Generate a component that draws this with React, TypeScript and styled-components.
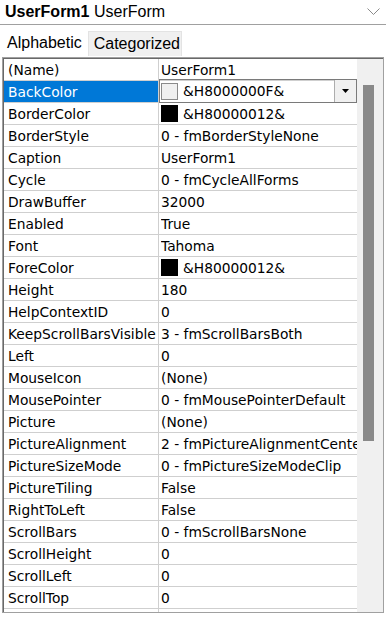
import React from "react";
import styled, { createGlobalStyle } from "styled-components";

const Global = createGlobalStyle`
  html, body { margin: 0; padding: 0; background: #ffffff; }
  body { font-family: "Liberation Sans", Arial, sans-serif; color: #000; width: 386px; height: 617px; overflow: hidden; }
  * { box-sizing: border-box; }
`;

const Window = styled.div`
  width: 386px;
  height: 617px;
  display: flex;
  flex-direction: column;
  background: #ffffff;
`;

const Header = styled.div`
  height: 25px;
  display: flex;
  align-items: center;
  padding: 0 6px 1px 5px;
  border-bottom: 1px solid #a0a0a0;
  font-size: 16px;
`;

const Title = styled.div`
  flex: 1;
  white-space: nowrap;
  b { font-weight: 700; }
`;

const TabBar = styled.div`
  height: 32px;
  display: flex;
  align-items: flex-end;
  padding: 0 0 0 2px;
`;

const Tab = styled.div<{ $active?: boolean }>`
  height: ${(p) => (p.$active ? 30 : 25)}px;
  padding: ${(p) => (p.$active ? "0 5px 0 4px" : "0 1px 0 5px")};
  display: flex;
  align-items: center;
  font-size: 16px;
  background: ${(p) => (p.$active ? "#ffffff" : "#f0f0f0")};
  border: 1px solid ${(p) => (p.$active ? "#ffffff" : "#e3e3e3")};
  border-bottom: none;
  margin-bottom: ${(p) => (p.$active ? 0 : 1)}px;
`;

const Frame = styled.div`
  margin-left: 2px;
  width: 382px;
  height: 556px;
  border: 1px solid #a0a0a0;
  display: flex;
`;

const Inner = styled.div`
  flex: 1;
  display: flex;
  border-left: 1px solid #696969;
  border-top: 1px solid #696969;
  overflow: hidden;
`;

const List = styled.div`
  flex: 1;
  overflow: hidden;
  display: flex;
  flex-direction: column;
`;

const Row = styled.div`
  height: 22px;
  flex: none;
  display: flex;
  border-bottom: 1px solid #cfcfcf;
  font-family: "DejaVu Sans", Tahoma, Verdana, sans-serif;
  font-size: 13.8px;
`;

const NameCell = styled.div<{ $selected?: boolean }>`
  width: 155px;
  flex: none;
  padding-left: 4px;
  display: flex;
  align-items: center;
  white-space: nowrap;
  overflow: hidden;
  border-right: 1px solid #cfcfcf;
  background: ${(p) => (p.$selected ? "#0078d7" : "transparent")};
  color: ${(p) => (p.$selected ? "#ffffff" : "#000000")};
`;

const ValueCell = styled.div<{ $edit?: boolean }>`
  flex: 1;
  min-width: 0;
  display: flex;
  align-items: center;
  padding-left: ${(p) => (p.$edit ? 1 : 2)}px;
  white-space: nowrap;
  overflow: hidden;
  border: ${(p) => (p.$edit ? "1px solid #7a7a7a" : "none")};
  margin: ${(p) => (p.$edit ? "-2px 0 -1px 0" : "0")};
`;

const ValueText = styled.span`
  flex: 1;
  overflow: hidden;
`;

const Swatch = styled.span<{ $color: string }>`
  width: 17px;
  height: 17px;
  flex: none;
  margin-right: 5px;
  background: ${(p) => p.$color};
  border: 1px solid ${(p) => (p.$color === "#000000" ? "#000000" : "#8a8a8a")};
`;

const DropButton = styled.span`
  width: 22px;
  align-self: stretch;
  flex: none;
  border-left: 1px solid #adadad;
  background: #f0f0f0;
  display: flex;
  align-items: center;
  justify-content: center;
`;

const Scrollbar = styled.div`
  width: 26px;
  flex: none;
  background: #f0f0f0;
  padding: 26px 0 0 6px;
`;

const Thumb = styled.div`
  width: 11px;
  height: 356px;
  background: #898989;
`;

type Prop = { name: string; value: string; swatch?: string; selected?: boolean };

const props: Prop[] = [
  { name: "(Name)", value: "UserForm1" },
  { name: "BackColor", value: "&H8000000F&", swatch: "#f0f0f0", selected: true },
  { name: "BorderColor", value: "&H80000012&", swatch: "#000000" },
  { name: "BorderStyle", value: "0 - fmBorderStyleNone" },
  { name: "Caption", value: "UserForm1" },
  { name: "Cycle", value: "0 - fmCycleAllForms" },
  { name: "DrawBuffer", value: "32000" },
  { name: "Enabled", value: "True" },
  { name: "Font", value: "Tahoma" },
  { name: "ForeColor", value: "&H80000012&", swatch: "#000000" },
  { name: "Height", value: "180" },
  { name: "HelpContextID", value: "0" },
  { name: "KeepScrollBarsVisible", value: "3 - fmScrollBarsBoth" },
  { name: "Left", value: "0" },
  { name: "MouseIcon", value: "(None)" },
  { name: "MousePointer", value: "0 - fmMousePointerDefault" },
  { name: "Picture", value: "(None)" },
  { name: "PictureAlignment", value: "2 - fmPictureAlignmentCenter" },
  { name: "PictureSizeMode", value: "0 - fmPictureSizeModeClip" },
  { name: "PictureTiling", value: "False" },
  { name: "RightToLeft", value: "False" },
  { name: "ScrollBars", value: "0 - fmScrollBarsNone" },
  { name: "ScrollHeight", value: "0" },
  { name: "ScrollLeft", value: "0" },
  { name: "ScrollTop", value: "0" },
];

export default function App() {
  return (
    <>
      <Global />
      <Window>
        <Header>
          <Title>
            <b>UserForm1</b> UserForm
          </Title>
          <svg width="13" height="8" viewBox="0 0 13 8">
            <polyline points="0.5,0.5 6.5,6.5 12.5,0.5" fill="none" stroke="#8a8a8a" strokeWidth="1" />
          </svg>
        </Header>
        <TabBar>
          <Tab $active>Alphabetic</Tab>
          <Tab>Categorized</Tab>
        </TabBar>
        <Frame>
          <Inner>
            <List>
              {props.map((p) => (
                <Row key={p.name}>
                  <NameCell $selected={p.selected}>{p.name}</NameCell>
                  <ValueCell $edit={p.selected}>
                    {p.swatch && <Swatch $color={p.swatch} />}
                    <ValueText>{p.value}</ValueText>
                    {p.selected && (
                      <DropButton>
                        <svg width="7" height="4" viewBox="0 0 7 4">
                          <polygon points="0,0 7,0 3.5,4" fill="#000" />
                        </svg>
                      </DropButton>
                    )}
                  </ValueCell>
                </Row>
              ))}
              <Row>
                <NameCell />
                <ValueCell />
              </Row>
            </List>
            <Scrollbar>
              <Thumb />
            </Scrollbar>
          </Inner>
        </Frame>
      </Window>
    </>
  );
}
